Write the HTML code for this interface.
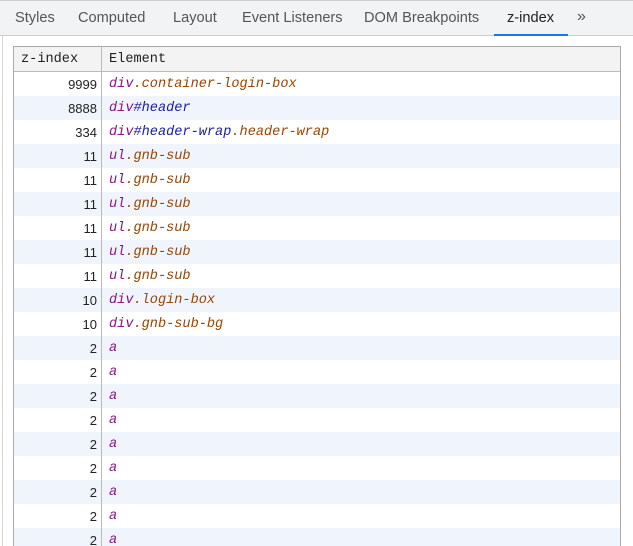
<!DOCTYPE html>
<html style="overflow:hidden;height:546px"><head><meta charset="utf-8"><style>
body{margin:0;width:633px;height:546px;overflow:hidden;background:#fff;font-family:"Liberation Sans",sans-serif;position:relative}
.tabs{position:absolute;left:0;top:0;width:633px;height:36px;background:#f1f3f4;border-top:1px solid #d0d0d0;border-bottom:1px solid #cbcdd1;box-sizing:border-box}
.tab{position:absolute;top:9px;font-size:14.6px;color:#555;white-space:nowrap}
.ul{position:absolute;left:494px;top:33px;width:74px;height:2px;background:#1a73e8}
.vl{position:absolute;left:2px;top:36px;width:1px;height:510px;background:#d5d5d5}
.tbl{position:absolute;left:13px;top:46px;width:608px;height:500px;border:1px solid #aaa;border-bottom:none;box-sizing:border-box;overflow:hidden}
.hdr{position:absolute;left:0;top:0;width:100%;height:25px;background:#f3f3f3;border-bottom:1px solid #bbb;box-sizing:border-box;font-family:"Liberation Mono",monospace;font-size:13.6px;color:#222}
.div{position:absolute;left:87px;top:0;width:1px;height:520px;background:#bbb}
.row{position:absolute;left:0;width:100%;height:24px}
.row.b{background:#f0f5fd}
.n{position:absolute;right:523px;top:5px;font-size:13px;color:#222}
.e{position:absolute;left:95px;top:5px;font-family:"Liberation Mono",monospace;font-style:italic;font-size:13.6px;color:#994500}
.p{color:#881280}.h{color:#1a1aa6}
</style></head><body>
<div class="tabs">
<span class="tab" style="left:15px">Styles</span>
<span class="tab" style="left:78px">Computed</span>
<span class="tab" style="left:173px">Layout</span>
<span class="tab" style="left:242px">Event Listeners</span>
<span class="tab" style="left:364px">DOM Breakpoints</span>
<span class="tab" style="left:507px;color:#222">z-index</span>
<span class="tab" style="left:577px;top:7px;font-size:16px">»</span>
<div class="ul"></div>
</div>
<div class="vl"></div>
<div class="tbl">
<div class="hdr"><span style="position:absolute;left:7px;top:5px">z-index</span><span style="position:absolute;left:95px;top:5px">Element</span></div>
<div class="row" style="top:25px"><span class="n">9999</span><span class="e"><span class="p">div</span>.container-login-box</span></div>
<div class="row b" style="top:49px"><span class="n">8888</span><span class="e"><span class="p">div</span><span class="h">#header</span></span></div>
<div class="row" style="top:73px"><span class="n">334</span><span class="e"><span class="p">div</span><span class="h">#header-wrap</span>.header-wrap</span></div>
<div class="row b" style="top:97px"><span class="n">11</span><span class="e"><span class="p">ul</span>.gnb-sub</span></div>
<div class="row" style="top:121px"><span class="n">11</span><span class="e"><span class="p">ul</span>.gnb-sub</span></div>
<div class="row b" style="top:145px"><span class="n">11</span><span class="e"><span class="p">ul</span>.gnb-sub</span></div>
<div class="row" style="top:169px"><span class="n">11</span><span class="e"><span class="p">ul</span>.gnb-sub</span></div>
<div class="row b" style="top:193px"><span class="n">11</span><span class="e"><span class="p">ul</span>.gnb-sub</span></div>
<div class="row" style="top:217px"><span class="n">11</span><span class="e"><span class="p">ul</span>.gnb-sub</span></div>
<div class="row b" style="top:241px"><span class="n">10</span><span class="e"><span class="p">div</span>.login-box</span></div>
<div class="row" style="top:265px"><span class="n">10</span><span class="e"><span class="p">div</span>.gnb-sub-bg</span></div>
<div class="row b" style="top:289px"><span class="n">2</span><span class="e p">a</span></div>
<div class="row" style="top:313px"><span class="n">2</span><span class="e p">a</span></div>
<div class="row b" style="top:337px"><span class="n">2</span><span class="e p">a</span></div>
<div class="row" style="top:361px"><span class="n">2</span><span class="e p">a</span></div>
<div class="row b" style="top:385px"><span class="n">2</span><span class="e p">a</span></div>
<div class="row" style="top:409px"><span class="n">2</span><span class="e p">a</span></div>
<div class="row b" style="top:433px"><span class="n">2</span><span class="e p">a</span></div>
<div class="row" style="top:457px"><span class="n">2</span><span class="e p">a</span></div>
<div class="row b" style="top:481px"><span class="n">2</span><span class="e p">a</span></div>
<div class="div"></div>
</div>
</body></html>
